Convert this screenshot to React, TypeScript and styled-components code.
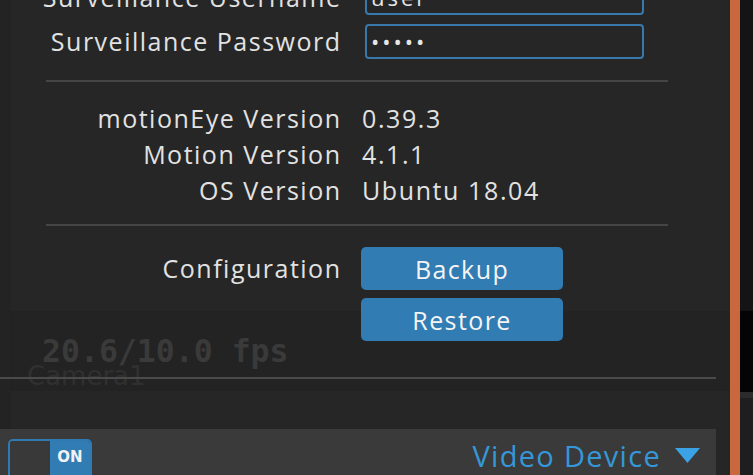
import React from 'react';
import styled, { createGlobalStyle } from 'styled-components';

const Global = createGlobalStyle`
  html, body { margin: 0; padding: 0; background: #141414; overflow: hidden; }
  #root { width: 753px; height: 475px; }
  * { box-sizing: border-box; }
`;

const Screen = styled.div`
  width: 753px;
  height: 475px;
  display: flex;
  overflow: hidden;
  font-family: 'Open Sans', 'DejaVu Sans', sans-serif;
`;

const Stage = styled.div`
  position: relative;
  width: 730px;
  height: 475px;
  background: #262626;
  overflow: hidden;
`;

/* the camera page that lies under the settings overlay */
const Behind = styled.div`
  position: absolute;
  inset: 0;
  display: flex;
`;

const LeftStrip = styled.div`
  width: 11px;
  height: 100%;
  background: #232323;
`;

const FrameColumn = styled.div`
  flex: 1;
  display: flex;
  flex-direction: column;
  padding-top: 311px;
`;

const CameraFrame = styled.div`
  height: 80px;
  background: #232323;
  border-left: 1px solid #202020;
  padding: 23px 0 0 30px;
  display: flex;
  flex-direction: column;
`;

const Fps = styled.div`
  font-family: 'DejaVu Sans Mono', monospace;
  font-weight: bold;
  font-size: 31.5px;
  line-height: 34px;
  color: #3a3a3a;
`;

const CameraName = styled.div`
  font-family: 'DejaVu Sans', sans-serif;
  font-size: 26px;
  line-height: 20px;
  margin-left: -15px;
  margin-top: -2px;
  color: #303030;
`;

const Panel = styled.div`
  position: relative;
  width: 716px;
  height: 475px;
  overflow: hidden;
  color: #e2e2e2;
`;

const ScrollContent = styled.div`
  margin-top: -25px;
  display: flex;
  flex-direction: column;
`;

const Row = styled.div<{ $h: number }>`
  display: grid;
  grid-template-columns: 340px 1fr;
  column-gap: 21px;
  align-items: center;
  height: ${(p) => p.$h}px;
`;

const Label = styled.div`
  text-align: right;
  font-size: 25px;
  letter-spacing: 1.5px;
  line-height: 30px;
  white-space: nowrap;
  margin-right: -1.5px;
`;

const Value = styled.div`
  font-size: 25px;
  letter-spacing: 1.6px;
  line-height: 30px;
  padding-left: 1px;
  white-space: nowrap;
`;

const TextInput = styled.input`
  width: 279px;
  height: 35px;
  margin-left: 4px;
  background: transparent;
  border: 2px solid #3878ab;
  border-radius: 4px;
  color: #e6e6e6;
  font-family: 'Open Sans', 'DejaVu Sans', sans-serif;
  font-size: 22px;
  padding: 0 4px;
  outline: none;
  letter-spacing: 3px;
`;

const Divider = styled.div<{ $top: number; $bottom: number }>`
  height: 2px;
  background: #454545;
  margin: ${(p) => p.$top}px 48px ${(p) => p.$bottom}px 46px;
`;

const ButtonStack = styled.div`
  display: flex;
  flex-direction: column;
  gap: 8px;
  align-self: start;
`;

const Button = styled.button`
  width: 202px;
  height: 43px;
  border: none;
  border-radius: 5px;
  background: #317cb3;
  color: #f4f4f4;
  font-family: 'Open Sans', 'DejaVu Sans', sans-serif;
  font-size: 25px;
  letter-spacing: 1.4px;
  padding: 0;
  cursor: pointer;
`;

const ConfigRow = styled.div`
  display: grid;
  grid-template-columns: 340px 1fr;
  column-gap: 21px;
  margin-top: 21px;
`;

const ConfigLabel = styled(Label)`
  margin-top: 6px;
`;

const SectionEnd = styled.div`
  height: 2px;
  background: #4a4a4a;
  margin-top: 36px;
`;

const SectionHeader = styled.div`
  margin-top: 50px;
  height: 60px;
  background: #3a3a3a;
  display: flex;
  align-items: flex-start;
  justify-content: space-between;
  padding: 10px 16px 0 8px;
`;

const Toggle = styled.div`
  width: 84px;
  height: 40px;
  border: 2px solid #2f7ab3;
  border-radius: 5px;
  display: flex;
  overflow: hidden;
`;

const Knob = styled.div`
  width: 40px;
  background: #393939;
`;

const ToggleOn = styled.div`
  flex: 1;
  background: #317cb3;
  color: #f2f2f2;
  font-family: 'DejaVu Sans', sans-serif;
  font-weight: bold;
  font-size: 15px;
  line-height: 32px;
  text-align: center;
`;

const SectionTitle = styled.div`
  display: flex;
  align-items: center;
  gap: 14px;
  color: #3597d8;
  font-size: 29px;
  letter-spacing: 1.3px;
  line-height: 34px;
`;

const OrangeBar = styled.div`
  width: 10px;
  height: 475px;
  background: #c9673e;
`;

const RightStrip = styled.div`
  width: 13px;
  height: 475px;
  display: flex;
  flex-direction: column;
`;

const StripPart = styled.div<{ $h: number; $c: string }>`
  height: ${(p) => p.$h}px;
  background: ${(p) => p.$c};
  flex-shrink: 0;
`;

const StripRest = styled.div`
  flex: 1;
  background: #1e1e1e;
`;

export default function App() {
  return (
    <>
      <Global />
      <Screen>
        <Stage>
          <Behind>
            <LeftStrip />
            <FrameColumn>
              <CameraFrame>
                <Fps>20.6/10.0 fps</Fps>
                <CameraName>Camera1</CameraName>
              </CameraFrame>
            </FrameColumn>
          </Behind>
          <Panel>
            <ScrollContent>
              <Row $h={44}>
                <Label>Surveillance Username</Label>
                <TextInput type="text" defaultValue="user" readOnly />
              </Row>
              <Row $h={44}>
                <Label>Surveillance Password</Label>
                <TextInput type="password" defaultValue="12345" readOnly />
              </Row>
              <Divider $top={17} $bottom={18} />
              <Row $h={36}>
                <Label>motionEye Version</Label>
                <Value>0.39.3</Value>
              </Row>
              <Row $h={36}>
                <Label>Motion Version</Label>
                <Value>4.1.1</Value>
              </Row>
              <Row $h={35}>
                <Label>OS Version</Label>
                <Value>Ubuntu 18.04</Value>
              </Row>
              <Divider $top={17} $bottom={0} />
              <ConfigRow>
                <ConfigLabel>Configuration</ConfigLabel>
                <ButtonStack>
                  <Button>Backup</Button>
                  <Button>Restore</Button>
                </ButtonStack>
              </ConfigRow>
              <SectionEnd />
              <SectionHeader>
                <Toggle>
                  <Knob />
                  <ToggleOn>ON</ToggleOn>
                </Toggle>
                <SectionTitle>
                  Video Device
                  <svg width="25" height="16" viewBox="0 0 25 16">
                    <polygon points="0,0 25,0 12.5,15" fill="#3aa3e6" />
                  </svg>
                </SectionTitle>
              </SectionHeader>
            </ScrollContent>
          </Panel>
        </Stage>
        <OrangeBar />
        <RightStrip>
          <StripPart $h={311} $c="#141414" />
          <StripPart $h={81} $c="#040404" />
          <StripPart $h={6} $c="#2b2b2b" />
          <StripRest />
        </RightStrip>
      </Screen>
    </>
  );
}
